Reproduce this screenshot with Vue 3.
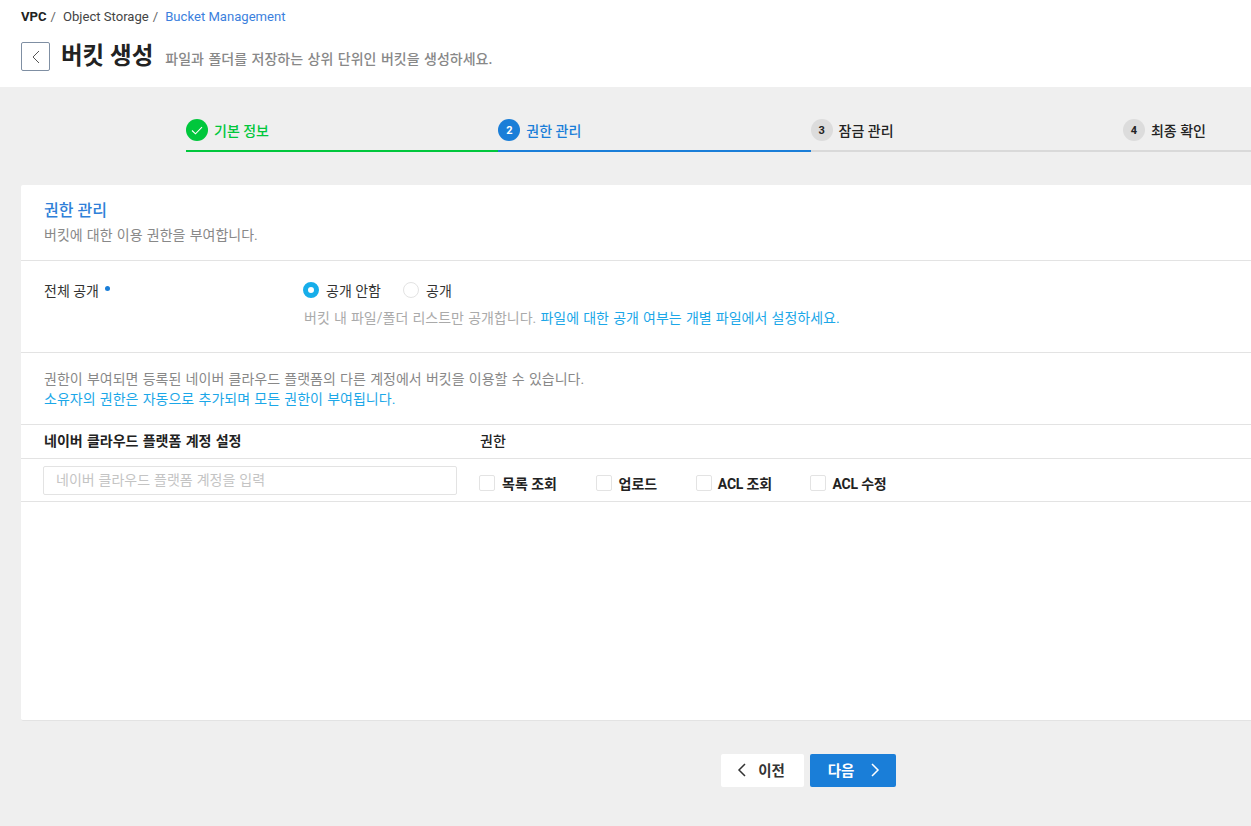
<template>
  <div class="page">
    <header class="page-head">
      <nav class="crumbs">
        <b>VPC</b><span class="sep">/</span>
        <span>Object Storage</span><span class="sep">/</span>
        <span class="current">Bucket Management</span>
      </nav>
      <div class="title-row">
        <button class="back" aria-label="back">
          <svg width="10" height="14" viewBox="0 0 10 14"><path d="M8 1 2 7l6 6" fill="none" stroke="#555" stroke-width="1" /></svg>
        </button>
        <h1>버킷 생성</h1>
        <p>파일과 폴더를 저장하는 상위 단위인 버킷을 생성하세요.</p>
      </div>
    </header>

    <ol class="steps">
      <li v-for="step in steps" :key="step.no" class="step" :class="step.state">
        <span class="dot">
          <svg v-if="step.state === 'done'" width="14" height="11" viewBox="0 0 14 11"><path d="M2 5.5 5.500 8.800 12 2.200" fill="none" stroke="#fff" stroke-width="1.100" /></svg>
          <template v-else>{{ step.no }}</template>
        </span>
        <span class="step-name">{{ step.name }}</span>
      </li>
    </ol>

    <section class="card">
      <div class="card-head">
        <h2>권한 관리</h2>
        <p>버킷에 대한 이용 권한을 부여합니다.</p>
      </div>

      <div class="public-row">
        <div class="label">전체 공개<i class="required"></i></div>
        <div class="public-body">
          <div class="radios">
            <label class="radio on"><span class="ring"></span>공개 안함</label>
            <label class="radio"><span class="ring"></span>공개</label>
          </div>
          <p class="hint">버킷 내 파일/폴더 리스트만 공개합니다. <span class="sky">파일에 대한 공개 여부는 개별 파일에서 설정하세요.</span></p>
        </div>
      </div>

      <div class="note">
        <p>권한이 부여되면 등록된 네이버 클라우드 플랫폼의 다른 계정에서 버킷을 이용할 수 있습니다.</p>
        <p class="sky">소유자의 권한은 자동으로 추가되며 모든 권한이 부여됩니다.</p>
      </div>

      <div class="table-head">
        <div class="col-account strong">네이버 클라우드 플랫폼 계정 설정</div>
        <div>권한</div>
      </div>
      <div class="table-row">
        <div class="col-account">
          <input type="text" placeholder="네이버 클라우드 플랫폼 계정을 입력" />
        </div>
        <div class="checks">
          <label v-for="perm in perms" :key="perm" class="check" :class="{ acl: perm.startsWith('ACL') }"><span class="box"></span>{{ perm }}</label>
        </div>
      </div>
    </section>

    <div class="actions">
      <button class="btn prev">
        <svg width="10" height="14" viewBox="0 0 10 14"><path d="M8 1 2 7l6 6" fill="none" stroke="#333" stroke-width="1.500" /></svg>
        이전
      </button>
      <button class="btn next">
        다음
        <svg width="10" height="14" viewBox="0 0 10 14"><path d="M2 1l6 6-6 6" fill="none" stroke="#fff" stroke-width="1.500" /></svg>
      </button>
    </div>
  </div>
</template>

<script setup>
const steps = [
  { no: 1, name: '기본 정보', state: 'done' },
  { no: 2, name: '권한 관리', state: 'active' },
  { no: 3, name: '잠금 관리', state: '' },
  { no: 4, name: '최종 확인', state: '' }
]

const perms = ['목록 조회', '업로드', 'ACL 조회', 'ACL 수정']
</script>

<style>
html, body {
  margin: 0;
  overflow: hidden;
}
</style>

<style scoped>
.page {
  width: 1251px;
  height: 826px;
  overflow: hidden;
  background: #efefef;
  font-family: Roboto, "Noto Sans CJK KR", sans-serif;
  font-size: 14px;
  color: #222;
}

.page-head {
  height: 87px;
  box-sizing: border-box;
  padding: 8px 0 0 21px;
  background: #fff;
}

.crumbs {
  display: flex;
  align-items: center;
  height: 16px;
  font-size: 13.100px;
  color: #444;
}

.crumbs b {
  font-weight: 700;
  color: #222;
}

.sep {
  margin: 0 7px 0 4px;
  color: #666;
}

.current {
  color: #3b7fdd;
}

.title-row {
  display: flex;
  align-items: center;
  margin-top: 18px;
  height: 29px;
}

.back {
  display: flex;
  align-items: center;
  justify-content: center;
  width: 29px;
  height: 29px;
  padding: 0;
  background: #fff;
  border: 1px solid #7f8fa3;
  border-radius: 2px;
}

h1 {
  margin: -5px 0 0 11px;
  font-size: 23.500px;
  font-weight: 700;
  color: #222;
}

.title-row p {
  margin: 3px 0 0 12px;
  font-size: 14px;
  font-weight: 500;
  word-spacing: 1px;
  color: #888;
}

.steps {
  display: flex;
  list-style: none;
  margin: 0;
  padding: 33px 0 0 186px;
}

.step {
  flex: 0 0 312.3px;
  display: flex;
  align-items: center;
  gap: 6px;
  box-sizing: border-box;
  height: 32px;
  padding-bottom: 10px;
  border-bottom: 2px solid #d9d9d9;
  font-size: 14px;
  font-weight: 500;
}

.dot {
  display: flex;
  align-items: center;
  justify-content: center;
  width: 22px;
  height: 22px;
  border-radius: 50%;
  background: #dcdcdc;
  font-size: 11px;
  font-weight: 700;
}

.step.done {
  border-color: #00c73c;
  color: #00c73c;
}

.step.done .dot {
  background: #00c73c;
}

.step.active {
  border-color: #1a7ed8;
  color: #1a7ed8;
}

.step.active .dot {
  background: #1a7ed8;
  color: #fff;
}

.card {
  margin: 33px 0 0 21px;
  height: 536px;
  background: #fff;
  border-radius: 2px 0 0 2px;
  border-bottom: 1px solid #e3e3e3;
  box-sizing: border-box;
}

.card-head {
  height: 76px;
  box-sizing: border-box;
  padding: 16px 0 0 23px;
  border-bottom: 1px solid #e3e3e3;
}

h2 {
  margin: 0;
  font-size: 16px;
  line-height: 20px;
  font-weight: 500;
  color: #2f7fd8;
}

.card-head p {
  margin: 6px 0 0;
  font-size: 14px;
  line-height: 16px;
  word-spacing: 0.75px;
  color: #888;
}

.public-row {
  display: flex;
  height: 92px;
  box-sizing: border-box;
  padding: 19px 0 0 23px;
  border-bottom: 1px solid #e3e3e3;
}

.label {
  width: 259px;
  display: flex;
  align-items: flex-start;
  margin-top: 1px;
  line-height: 20px;
  color: #333;
}

.required {
  width: 5px;
  height: 5px;
  margin: 5px 0 0 6px;
  border-radius: 50%;
  background: #1a7ed8;
}

.radios {
  display: flex;
  gap: 22px;
  height: 20px;
}

.radio {
  display: flex;
  align-items: center;
  gap: 7px;
  color: #333;
}

.ring {
  width: 14px;
  height: 14px;
  border: 1px solid #e3e3e3;
  border-radius: 50%;
  background: #fff;
}

.radio.on .ring {
  width: 6px;
  height: 6px;
  border: 5px solid #17aeea;
}

.hint {
  margin: 8px 0 0 1px;
  line-height: 20px;
  word-spacing: 0.7px;
  color: #aaa;
}

.sky {
  color: #1ba7e8;
}

.note {
  height: 72px;
  box-sizing: border-box;
  padding: 16px 0 0 23px;
  border-bottom: 1px solid #e3e3e3;
  color: #888;
  line-height: 20px;
  word-spacing: 0.8px;
}

.note p {
  margin: 0;
}

.table-head {
  display: flex;
  align-items: center;
  height: 34px;
  box-sizing: border-box;
  padding: 0 0 4px 23px;
  border-bottom: 1px solid #e3e3e3;
  font-weight: 500;
}

.strong {
  font-weight: 700;
  word-spacing: 0.8px;
}

.col-account {
  width: 436px;
  flex: none;
}

.table-row {
  display: flex;
  align-items: center;
  height: 43px;
  box-sizing: border-box;
  padding: 0 0 0 22px;
  border-bottom: 1px solid #e3e3e3;
}

.table-row .col-account {
  width: 437px;
}

input {
  display: block;
  width: 414px;
  height: 29px;
  margin-top: 1px;
  box-sizing: border-box;
  padding: 0 12px 2px;
  border: 1px solid #e3e3e3;
  border-radius: 2px;
  font: inherit;
  word-spacing: 0.5px;
}

input::placeholder {
  color: #c4c4c4;
}

.checks {
  display: flex;
  margin: 6px 0 0 -1px;
}

.check {
  display: flex;
  align-items: center;
  gap: 7px;
  margin-right: 38.6px;
  font-weight: 700;
}

.check.acl {
  gap: 6px;
  letter-spacing: -0.2px;
}

.box {
  width: 14px;
  height: 14px;
  border: 1px solid #e3e3e3;
  border-radius: 2px;
}

.actions {
  display: flex;
  gap: 6px;
  padding: 33px 0 0 721px;
}

.btn {
  display: flex;
  align-items: center;
  justify-content: center;
  gap: 11px;
  height: 33px;
  padding: 0 0 2px;
  border: 0;
  border-radius: 2px;
  font: inherit;
  font-size: 14.500px;
  font-weight: 700;
}

.prev {
  width: 83px;
  padding-right: 3px;
  background: #fff;
  color: #333;
}

.next {
  width: 86px;
  gap: 16px;
  padding-left: 2px;
  background: #1a7ed8;
  color: #fff;
}
</style>
